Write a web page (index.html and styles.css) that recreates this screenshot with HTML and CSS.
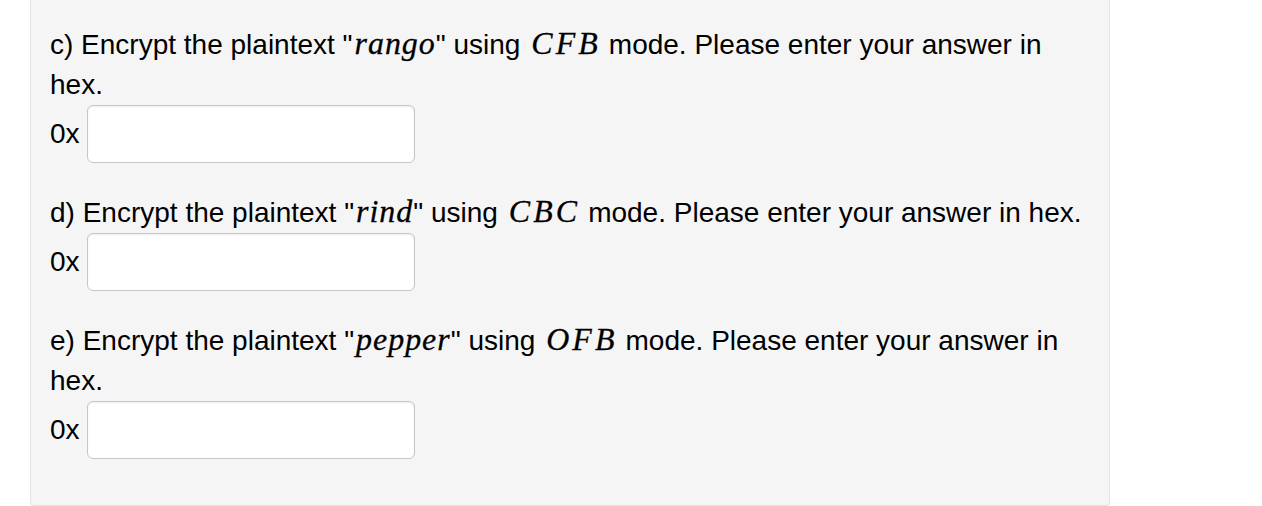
FILE: index.html
```html
<!DOCTYPE html>
<html lang="en">
<head>
<meta charset="utf-8">
<title>Encryption modes</title>
<link rel="stylesheet" href="styles.css">
</head>
<body>
<div class="panel">
  <div class="question">
    <p class="prompt">c) Encrypt the plaintext "<span class="math">rango</span>" using <span class="math caps">CFB</span> mode. Please enter your answer in hex.</p>
    <div class="answer"><span class="prefix">0x</span><input class="field" type="text"></div>
  </div>
  <div class="question">
    <p class="prompt">d) Encrypt the plaintext "<span class="math">rind</span>" using <span class="math caps">CBC</span> mode. Please enter your answer in hex.</p>
    <div class="answer"><span class="prefix">0x</span><input class="field" type="text"></div>
  </div>
  <div class="question">
    <p class="prompt">e) Encrypt the plaintext "<span class="math">pepper</span>" using <span class="math caps">OFB</span> mode. Please enter your answer in hex.</p>
    <div class="answer"><span class="prefix">0x</span><input class="field" type="text"></div>
  </div>
</div>
</body>
</html>
```

FILE: styles.css
```css
html, body {
  margin: 0;
  padding: 0;
  background: #ffffff;
}
body {
  font-family: "Liberation Sans", Arial, sans-serif;
  font-size: 28px;
  color: #000;
}
.panel {
  margin-left: 30px;
  width: 1047px;
  padding: 25px 12px 46px 19px;
  background: #f5f5f5;
  border: 1px solid #e3e3e3;
  border-top: none;
  border-radius: 0 0 4px 4px;
  display: flex;
  flex-direction: column;
  gap: 30px;
}
.prompt {
  margin: 0;
  line-height: 40px;
}
.math {
  font-family: "Liberation Serif", "Times New Roman", serif;
  font-style: italic;
  font-size: 1.14em;
  line-height: 1;
  letter-spacing: 1px;
  margin-left: 2px;
  -webkit-text-stroke: 0.3px #000;
}
.caps {
  letter-spacing: 0.1em;
  margin-left: 3px;
}
.answer {
  display: flex;
  align-items: center;
  gap: 7px;
}
.prefix {
  line-height: 40px;
}
.field {
  box-sizing: border-box;
  width: 328px;
  height: 58px;
  margin: 0;
  background: #fff;
  border: 1px solid #c6c6c6;
  border-radius: 6px;
  box-shadow: inset 0 1px 2px rgba(0,0,0,0.07);
  font: inherit;
}
```
